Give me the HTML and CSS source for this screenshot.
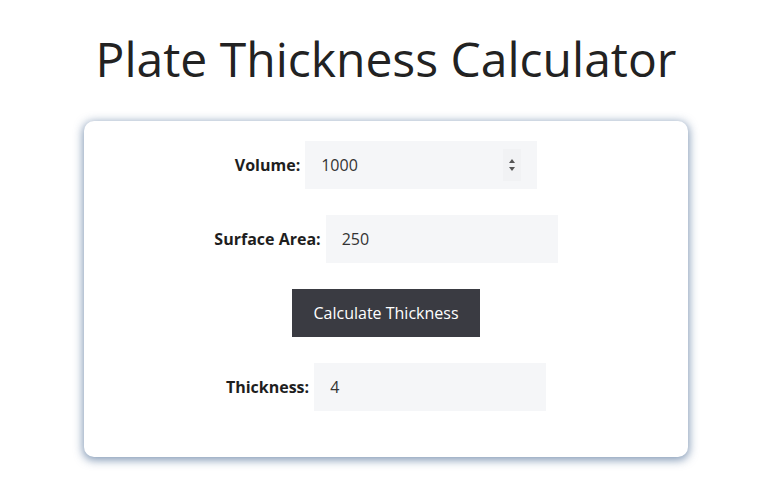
FILE: index.html
```html
<!DOCTYPE html>
<html lang="en">
<head>
    <meta charset="UTF-8">
    <meta name="viewport" content="width=device-width, initial-scale=1.0">
    <title>Plate Thickness Calculator</title>
    <link rel="stylesheet" href="styles.css">
</head>
<body>

<h1>Plate Thickness Calculator</h1>

<div class="calculator">
    <div class="row">
        <label for="volume">Volume:</label>
        <div class="number-wrap">
            <input type="number" id="volume" value="1000">
            <span class="spinner">
                <svg width="10" height="22" viewBox="0 0 10 22">
                    <path d="M5 5 L8 9 L2 9 Z" fill="#555"/>
                    <path d="M5 17 L8 13 L2 13 Z" fill="#555"/>
                </svg>
            </span>
        </div>
    </div>
    <div class="row">
        <label for="area">Surface Area:</label>
        <input type="text" id="area" value="250">
    </div>
    <div class="row">
        <button onclick="calculateThickness()">Calculate Thickness</button>
    </div>
    <div class="row">
        <label for="thickness">Thickness:</label>
        <input type="text" id="thickness" value="4" readonly>
    </div>
</div>

<script>
    function calculateThickness() {
        const volume = parseFloat(document.getElementById("volume").value);
        const area = parseFloat(document.getElementById("area").value);
        if (!area) {
            alert("Please enter a surface area!");
            return;
        }
        document.getElementById("thickness").value = volume / area;
    }
</script>

</body>
</html>
```

FILE: styles.css
```css
body {
    font-family: "Open Sans", "Noto Sans", sans-serif;
    margin: 0;
    padding: 0 0 0 4px;
    background-color: #fff;
    color: #1e1e1e;
}
h1 {
    text-align: center;
    font-weight: normal;
    font-size: 48px;
    margin: 26px 0 30px;
    color: #222;
}
.calculator {
    width: 564px;
    margin: 0 auto 20px;
    padding: 20px;
    background-color: #fff;
    border-radius: 10px;
    box-shadow: 0 2px 10px 1px rgba(60, 95, 140, 0.65);
}
.row {
    display: flex;
    justify-content: center;
    align-items: center;
    gap: 5px;
    margin-bottom: 26px;
}
label {
    font-weight: bold;
    font-size: 16px;
}
input {
    width: 232px;
    height: 48px;
    box-sizing: border-box;
    padding: 0 16px;
    border: none;
    background-color: #f5f6f8;
    font-family: inherit;
    font-size: 16px;
    color: #333;
    outline: none;
}
input[type=number]::-webkit-inner-spin-button,
input[type=number]::-webkit-outer-spin-button {
    -webkit-appearance: none;
    margin: 0;
}
.number-wrap {
    position: relative;
}
.spinner {
    position: absolute;
    right: 16px;
    top: 8px;
    width: 18px;
    height: 32px;
    display: flex;
    align-items: center;
    justify-content: center;
    background-color: #f1f2f4;
}
button {
    height: 48px;
    padding: 0 21px;
    border: none;
    background-color: #3a3b42;
    color: #fff;
    font-family: inherit;
    font-size: 16px;
    cursor: pointer;
}
```
